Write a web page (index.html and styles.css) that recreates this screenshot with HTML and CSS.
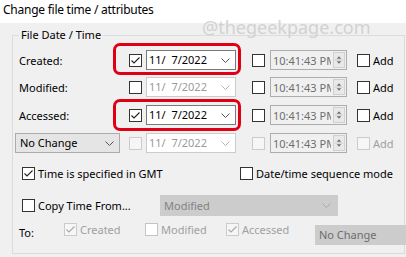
FILE: index.html
```html
<!DOCTYPE html>
<html>
<head>
<meta charset="utf-8">
<link rel="stylesheet" href="styles.css">
</head>
<body>
<div class="titlebar"><span class="title">Change file time / attributes</span></div>
<div class="watermark">@thegeekpage.com</div>
<fieldset class="group">
  <legend>File Date / Time</legend>
  <div class="rows">
    <div class="row">
      <span class="lbl">Created:</span>
      <span class="cb on"><svg viewBox="0 0 13 13"><polyline points="2.5,6.5 5,9 10.5,3.5"/></svg></span>
      <span class="date">11/&nbsp;&nbsp;7/2022<svg class="chev" viewBox="0 0 9 5"><polyline points="0.5,0.5 4.5,4.5 8.5,0.5"/></svg></span>
      <span class="cb tcb"></span>
      <span class="time"><span class="ttxt">10:41:43 PM</span><span class="spin"><svg viewBox="0 0 11 14"><path d="M3 5.5 L5.5 3 L8 5.5Z M3 8.5 L5.5 11 L8 8.5Z"/><line x1="1" y1="7" x2="10" y2="7"/></svg></span></span>
      <span class="cb acb"></span><span class="add">Add</span>
    </div>
    <div class="row">
      <span class="lbl">Modified:</span>
      <span class="cb"></span>
      <span class="date off">11/&nbsp;&nbsp;7/2022<svg class="chev" viewBox="0 0 9 5"><polyline points="0.5,0.5 4.5,4.5 8.5,0.5"/></svg></span>
      <span class="cb tcb"></span>
      <span class="time"><span class="ttxt">10:41:43 PM</span><span class="spin"><svg viewBox="0 0 11 14"><path d="M3 5.5 L5.5 3 L8 5.5Z M3 8.5 L5.5 11 L8 8.5Z"/><line x1="1" y1="7" x2="10" y2="7"/></svg></span></span>
      <span class="cb acb"></span><span class="add">Add</span>
    </div>
    <div class="row">
      <span class="lbl">Accessed:</span>
      <span class="cb on"><svg viewBox="0 0 13 13"><polyline points="2.5,6.5 5,9 10.5,3.5"/></svg></span>
      <span class="date">11/&nbsp;&nbsp;7/2022<svg class="chev" viewBox="0 0 9 5"><polyline points="0.5,0.5 4.5,4.5 8.5,0.5"/></svg></span>
      <span class="cb tcb"></span>
      <span class="time"><span class="ttxt">10:41:43 PM</span><span class="spin"><svg viewBox="0 0 11 14"><path d="M3 5.5 L5.5 3 L8 5.5Z M3 8.5 L5.5 11 L8 8.5Z"/><line x1="1" y1="7" x2="10" y2="7"/></svg></span></span>
      <span class="cb acb"></span><span class="add">Add</span>
    </div>
    <div class="row">
      <span class="combo">No Change<svg class="chev" viewBox="0 0 9 5"><polyline points="0.5,0.5 4.5,4.5 8.5,0.5"/></svg></span>
      <span class="cb dis"></span>
      <span class="date off">11/&nbsp;&nbsp;7/2022<svg class="chev" viewBox="0 0 9 5"><polyline points="0.5,0.5 4.5,4.5 8.5,0.5"/></svg></span>
      <span class="cb tcb dis"></span>
      <span class="time"><span class="ttxt">10:41:43 PM</span><span class="spin"><svg viewBox="0 0 11 14"><path d="M3 5.5 L5.5 3 L8 5.5Z M3 8.5 L5.5 11 L8 8.5Z"/><line x1="1" y1="7" x2="10" y2="7"/></svg></span></span>
      <span class="cb acb dis"></span><span class="add dtxt">Add</span>
    </div>
  </div>
  <div class="opt-row">
    <span class="opt gmt"><span class="cb on"><svg viewBox="0 0 13 13"><polyline points="2.5,6.5 5,9 10.5,3.5"/></svg></span><span class="otxt">Time is specified in GMT</span></span>
    <span class="opt"><span class="cb"></span><span class="otxt">Date/time sequence mode</span></span>
  </div>
  <div class="copy-row">
    <span class="opt copy"><span class="cb"></span><span class="otxt">Copy Time From...</span></span>
    <span class="dcombo">Modified<svg class="chev" viewBox="0 0 9 5"><polyline points="0.5,0.5 4.5,4.5 8.5,0.5"/></svg></span>
  </div>
  <div class="to-row">
    <span class="to">To:</span>
    <span class="opt t1"><span class="cb dis"><svg viewBox="0 0 13 13"><polyline points="2.5,6.5 5,9 10.5,3.5"/></svg></span><span class="otxt dtxt">Created</span></span>
    <span class="opt t2"><span class="cb dis2"></span><span class="otxt dtxt">Modified</span></span>
    <span class="opt t3"><span class="cb dis"><svg viewBox="0 0 13 13"><polyline points="2.5,6.5 5,9 10.5,3.5"/></svg></span><span class="otxt dtxt">Accessed</span></span>
    <span class="dfield">No Change</span>
  </div>
</fieldset>
<div class="hl hl1"></div>
<div class="hl hl2"></div>
</body>
</html>
```
FILE: styles.css
```css
* { box-sizing: border-box; }
html, body { margin: 0; padding: 0; }
body {
  width: 406px;
  height: 257px;
  overflow: hidden;
  background: #f0f0f0;
  font-family: "Noto Sans", "Open Sans", sans-serif;
  font-size: 11px;
  color: #000;
  position: relative;
  white-space: nowrap;
}
.titlebar {
  height: 23px;
  background: #fff;
  padding: 1px 0 0 3px;
}
.title { font-size: 12px; letter-spacing: -0.25px; line-height: 18px; }
.watermark {
  position: absolute;
  left: 202px;
  top: 15px;
  font-size: 18px;
  line-height: 25px;
  color: #d2d2d2;
}
.group {
  margin: 4px 1px 0 12px;
  padding: 0 0 0 2px;
  height: 227px;
  border: 1px solid #dcdcdc;
  min-width: 0;
}
.group legend {
  margin-left: 4px;
  padding: 0 2px 0 2px;
  line-height: 16px;
  height: 16px;
}
.rows {
  display: flex;
  flex-direction: column;
  gap: 8px;
  margin-top: 7px;
}
.row {
  display: flex;
  align-items: center;
  height: 20px;
}
.rows .row:nth-child(2) { margin-top: -1px; }
.lbl { width: 105px; padding-left: 4px; }
.cb {
  flex: none;
  width: 13px;
  height: 13px;
  border: 1px solid #333;
  background: #fff;
  margin-left: 9px;
  position: relative;
}
.cb svg { position: absolute; left: -1px; top: -1px; width: 13px; height: 13px; }
.cb polyline { fill: none; stroke: #222; stroke-width: 1.1; }
.cb.dis { border-color: #cccccc; background: #f6f6f6; }
.cb.dis polyline { stroke: #a8a8a8; }
.cb.dis2 { border-color: #c4c4c4; background: #fff; }
.date {
  flex: none;
  width: 90px;
  height: 20px;
  margin-left: 4px;
  border: 1px solid #7a7a7a;
  background: #fff;
  padding-left: 2px;
  line-height: 18px;
  position: relative;
}
.date.off { border-color: #cccccc; color: #9a9a9a; }
.chev {
  position: absolute;
  width: 9px;
  height: 5px;
  right: 5px;
  top: 7px;
}
.chev polyline { fill: none; stroke: #555; stroke-width: 1; }
.date.off .chev polyline { stroke: #b5b5b5; }
.tcb { margin-left: 16px; }
.time {
  flex: none;
  width: 77px;
  height: 20px;
  margin-left: 5px;
  border: 1px solid #adadad;
  background: #f0f0f0;
  display: flex;
  align-items: center;
  color: #6d6d6d;
  padding-left: 2px;
}
.ttxt { width: 58px; overflow: hidden; }
.spin {
  width: 12px;
  height: 16px;
  margin-left: 2px;
  border: 1px solid #d0d0d0;
  background: #e9e9e9;
}
.spin svg { display: block; width: 10px; height: 14px; }
.spin path { fill: #707070; }
.spin line { stroke: #c8c8c8; stroke-width: 1; }
.acb { margin-left: 10px; }
.add { margin-left: 3px; }
.dtxt { color: #a0a0a0; }
.combo {
  flex: none;
  width: 105px;
  height: 20px;
  border: 1px solid #acacac;
  background: #e5e5e5;
  padding-left: 4px;
  line-height: 18px;
  position: relative;
}
.combo .chev { right: 5px; }
.opt { display: flex; align-items: center; flex: none; }
.opt .cb { margin-left: 0; }
.otxt { margin-left: 3px; }
.opt-row {
  display: flex;
  align-items: center;
  height: 16px;
  margin-top: 12px;
  padding-left: 7px;
}
.gmt { width: 218px; }
.copy-row {
  display: flex;
  align-items: center;
  height: 21px;
  margin-top: 14px;
  padding-left: 7px;
}
.copy { width: 138px; }
.dcombo {
  width: 178px;
  height: 21px;
  background: #cccccc;
  color: #838383;
  padding-left: 4px;
  line-height: 21px;
  position: relative;
}
.dcombo .chev { right: 7px; top: 8px; }
.dcombo .chev polyline { stroke: #a9a9a9; }
.to-row {
  display: flex;
  align-items: flex-start;
  height: 22px;
  margin-top: 6px;
}
.to { padding-left: 4px; width: 49px; line-height: 14px; margin-top: 4px; }
.to-row .opt { height: 14px; margin-top: 0; }
.t1 { width: 81px; }
.t2 { width: 81px; }
.t3 { width: 89px; }
.dfield {
  margin-top: 3px;
  flex: 1;
  height: 20px;
  background: #cccccc;
  color: #6d6d6d;
  padding-left: 4px;
  line-height: 20px;
  margin-right: -4px;
}
.hl {
  position: absolute;
  left: 113px;
  width: 128px;
  height: 32px;
  border: 3px solid #e00016;
  border-radius: 7px;
}
.hl1 { top: 43px; }
.hl2 { top: 99px; }
```
